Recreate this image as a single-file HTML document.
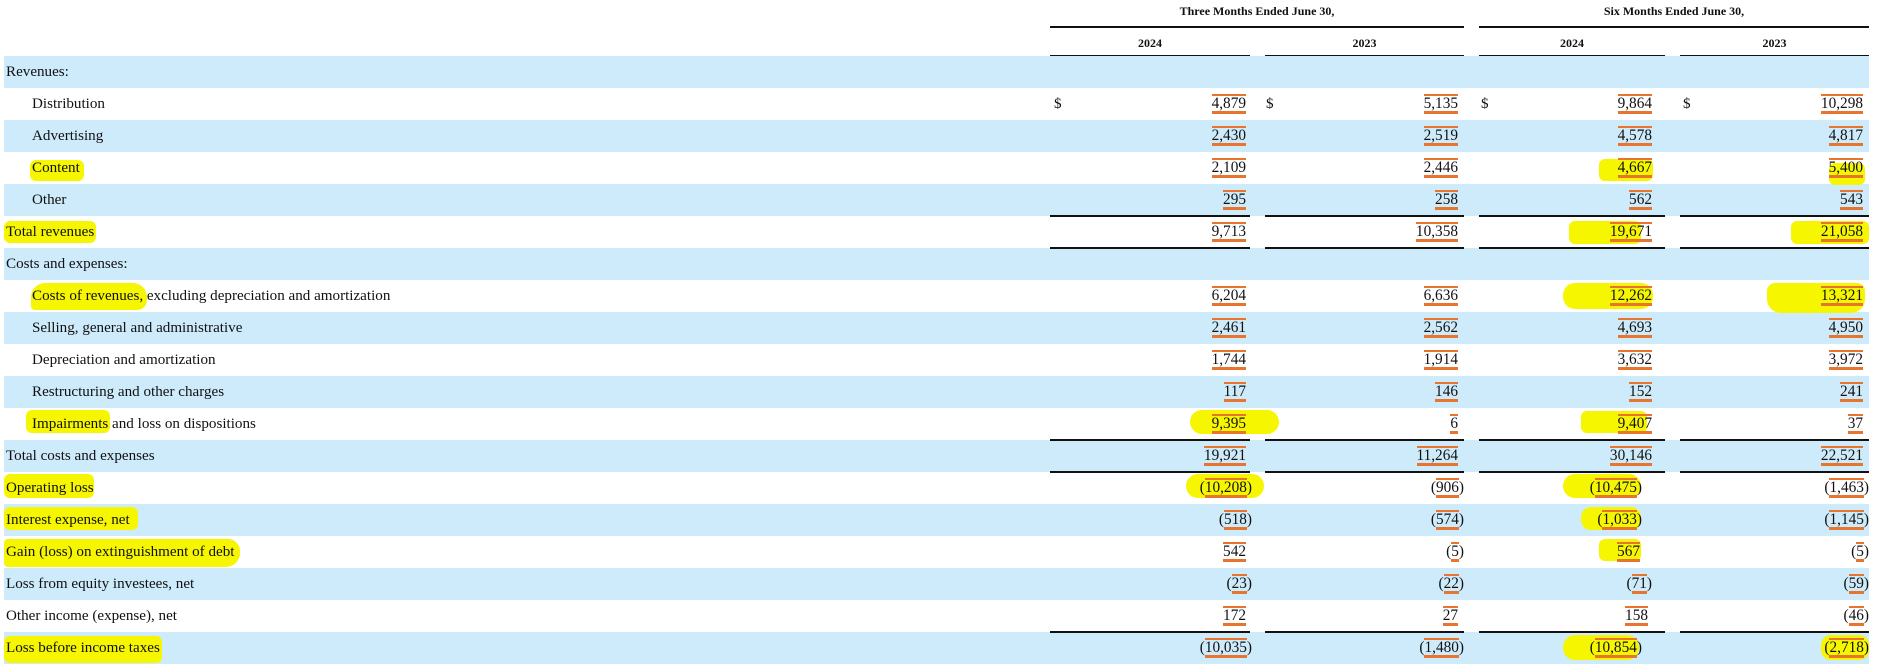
<!DOCTYPE html>
<html><head><meta charset="utf-8"><style>
body{margin:0;width:1878px;height:664px;background:#fff;position:relative;overflow:hidden;font-family:"Liberation Serif",serif;color:#111;}
.h{position:absolute;font-weight:bold;font-size:12px;text-align:center;line-height:14px;}
.ln{position:absolute;height:2px;background:#111;}
.row{position:absolute;left:4px;width:1865px;height:32px;}
.b{background:#cdebfb;}
.t{position:absolute;font-size:15.1px;line-height:32px;white-space:nowrap;z-index:2;}
.v{position:absolute;font-size:15.3px;line-height:32px;text-align:right;white-space:nowrap;z-index:2;}
.v span{border-top:2px solid #e8752e;border-bottom:3px solid #e8752e;line-height:15px;display:inline-block;}
.hl{position:absolute;background:#f6f600;border-radius:6px;z-index:1;}
</style></head><body>
<div class="h" style="left:1050px;width:414px;top:4px">Three Months Ended June 30,</div>
<div class="h" style="left:1479px;width:390px;top:4px">Six Months Ended June 30,</div>
<div class="ln" style="left:1050px;width:414px;top:26px"></div>
<div class="ln" style="left:1479px;width:390px;top:26px"></div>
<div class="h" style="left:1050px;width:200px;top:36px">2024</div>
<div class="h" style="left:1265px;width:199px;top:36px">2023</div>
<div class="h" style="left:1479px;width:186px;top:36px">2024</div>
<div class="h" style="left:1680px;width:189px;top:36px">2023</div>
<div class="ln" style="left:1050px;width:200px;top:55px"></div>
<div class="ln" style="left:1265px;width:199px;top:55px"></div>
<div class="ln" style="left:1479px;width:186px;top:55px"></div>
<div class="ln" style="left:1680px;width:189px;top:55px"></div>

<div class="row b" style="top:56px"></div>
<div class="row b" style="top:120px"></div>
<div class="row b" style="top:184px"></div>
<div class="row b" style="top:248px"></div>
<div class="row b" style="top:312px"></div>
<div class="row b" style="top:376px"></div>
<div class="row b" style="top:440px"></div>
<div class="row b" style="top:504px"></div>
<div class="row b" style="top:568px"></div>
<div class="row b" style="top:632px"></div>

<div class="hl" style="left:30px;top:160px;width:54px;height:21px"></div>
<div class="hl" style="left:4px;top:221px;width:92px;height:22px"></div>
<div class="hl" style="left:31px;top:283px;width:116px;height:27px;border-radius:14px 14px 10px 4px"></div>
<div class="hl" style="left:26px;top:410px;width:84px;height:23px"></div>
<div class="hl" style="left:1190px;top:410px;width:89px;height:24px;border-radius:12px"></div>
<div class="hl" style="left:4px;top:474px;width:90px;height:24px"></div>
<div class="hl" style="left:1186px;top:474px;width:78px;height:24px;border-radius:12px"></div>
<div class="hl" style="left:4px;top:507px;width:134px;height:23px"></div>
<div class="hl" style="left:4px;top:539px;width:236px;height:28px;border-radius:4px 12px 14px 4px"></div>
<div class="hl" style="left:4px;top:636px;width:158px;height:27px"></div>
<div class="hl" style="left:1569px;top:221px;width:72px;height:23px"></div>
<div class="hl" style="left:1791px;top:221px;width:78px;height:23px"></div>
<div class="hl" style="left:1599px;top:159px;width:54px;height:22px"></div>
<div class="hl" style="left:1829px;top:163px;width:36px;height:22px"></div>
<div class="hl" style="left:1563px;top:283px;width:90px;height:26px;border-radius:12px"></div>
<div class="hl" style="left:1767px;top:283px;width:98px;height:30px;border-radius:8px 8px 14px 14px"></div>
<div class="hl" style="left:1581px;top:411px;width:66px;height:22px"></div>
<div class="hl" style="left:1563px;top:474px;width:78px;height:24px;border-radius:12px"></div>
<div class="hl" style="left:1581px;top:507px;width:60px;height:23px;border-radius:10px"></div>
<div class="hl" style="left:1599px;top:539px;width:42px;height:22px"></div>
<div class="hl" style="left:1563px;top:635px;width:76px;height:25px;border-radius:12px"></div>
<div class="hl" style="left:1821px;top:635px;width:48px;height:25px;border-radius:10px"></div>

<div class="ln" style="left:1050px;width:200px;top:215px;height:1.5px"></div><div class="ln" style="left:1265px;width:199px;top:215px;height:1.5px"></div><div class="ln" style="left:1479px;width:186px;top:215px;height:1.5px"></div><div class="ln" style="left:1680px;width:189px;top:215px;height:1.5px"></div>
<div class="ln" style="left:1050px;width:200px;top:247px;height:1.5px"></div><div class="ln" style="left:1265px;width:199px;top:247px;height:1.5px"></div><div class="ln" style="left:1479px;width:186px;top:247px;height:1.5px"></div><div class="ln" style="left:1680px;width:189px;top:247px;height:1.5px"></div>
<div class="ln" style="left:1050px;width:200px;top:439px;height:1.5px"></div><div class="ln" style="left:1265px;width:199px;top:439px;height:1.5px"></div><div class="ln" style="left:1479px;width:186px;top:439px;height:1.5px"></div><div class="ln" style="left:1680px;width:189px;top:439px;height:1.5px"></div>
<div class="ln" style="left:1050px;width:200px;top:471px;height:1.5px"></div><div class="ln" style="left:1265px;width:199px;top:471px;height:1.5px"></div><div class="ln" style="left:1479px;width:186px;top:471px;height:1.5px"></div><div class="ln" style="left:1680px;width:189px;top:471px;height:1.5px"></div>
<div class="ln" style="left:1050px;width:200px;top:631px;height:1.5px"></div><div class="ln" style="left:1265px;width:199px;top:631px;height:1.5px"></div><div class="ln" style="left:1479px;width:186px;top:631px;height:1.5px"></div><div class="ln" style="left:1680px;width:189px;top:631px;height:1.5px"></div>

<div class="t" style="left:6px;top:56px">Revenues:</div>
<div class="t" style="left:32px;top:88px">Distribution</div>
<div class="t" style="left:32px;top:120px">Advertising</div>
<div class="t" style="left:32px;top:152px">Content</div>
<div class="t" style="left:32px;top:184px">Other</div>
<div class="t" style="left:6px;top:216px">Total revenues</div>
<div class="t" style="left:6px;top:248px">Costs and expenses:</div>
<div class="t" style="left:32px;top:280px">Costs of revenues, excluding depreciation and amortization</div>
<div class="t" style="left:32px;top:312px">Selling, general and administrative</div>
<div class="t" style="left:32px;top:344px">Depreciation and amortization</div>
<div class="t" style="left:32px;top:376px">Restructuring and other charges</div>
<div class="t" style="left:32px;top:408px">Impairments and loss on dispositions</div>
<div class="t" style="left:6px;top:440px">Total costs and expenses</div>
<div class="t" style="left:6px;top:472px">Operating loss</div>
<div class="t" style="left:6px;top:504px">Interest expense, net</div>
<div class="t" style="left:6px;top:536px">Gain (loss) on extinguishment of debt</div>
<div class="t" style="left:6px;top:568px">Loss from equity investees, net</div>
<div class="t" style="left:6px;top:600px">Other income (expense), net</div>
<div class="t" style="left:6px;top:632px">Loss before income taxes</div>

<div class="t" style="left:1054px;top:88px">$</div>
<div class="t" style="left:1266px;top:88px">$</div>
<div class="t" style="left:1481px;top:88px">$</div>
<div class="t" style="left:1683px;top:88px">$</div>

<div class="v" style="right:632px;top:88px"><span>4,879</span></div><div class="v" style="right:420px;top:88px"><span>5,135</span></div><div class="v" style="right:226px;top:88px"><span>9,864</span></div><div class="v" style="right:15px;top:88px"><span>10,298</span></div>
<div class="v" style="right:632px;top:120px"><span>2,430</span></div><div class="v" style="right:420px;top:120px"><span>2,519</span></div><div class="v" style="right:226px;top:120px"><span>4,578</span></div><div class="v" style="right:15px;top:120px"><span>4,817</span></div>
<div class="v" style="right:632px;top:152px"><span>2,109</span></div><div class="v" style="right:420px;top:152px"><span>2,446</span></div><div class="v" style="right:226px;top:152px"><span>4,667</span></div><div class="v" style="right:15px;top:152px"><span>5,400</span></div>
<div class="v" style="right:632px;top:184px"><span>295</span></div><div class="v" style="right:420px;top:184px"><span>258</span></div><div class="v" style="right:226px;top:184px"><span>562</span></div><div class="v" style="right:15px;top:184px"><span>543</span></div>
<div class="v" style="right:632px;top:216px"><span>9,713</span></div><div class="v" style="right:420px;top:216px"><span>10,358</span></div><div class="v" style="right:226px;top:216px"><span>19,671</span></div><div class="v" style="right:15px;top:216px"><span>21,058</span></div>
<div class="v" style="right:632px;top:280px"><span>6,204</span></div><div class="v" style="right:420px;top:280px"><span>6,636</span></div><div class="v" style="right:226px;top:280px"><span>12,262</span></div><div class="v" style="right:15px;top:280px"><span>13,321</span></div>
<div class="v" style="right:632px;top:312px"><span>2,461</span></div><div class="v" style="right:420px;top:312px"><span>2,562</span></div><div class="v" style="right:226px;top:312px"><span>4,693</span></div><div class="v" style="right:15px;top:312px"><span>4,950</span></div>
<div class="v" style="right:632px;top:344px"><span>1,744</span></div><div class="v" style="right:420px;top:344px"><span>1,914</span></div><div class="v" style="right:226px;top:344px"><span>3,632</span></div><div class="v" style="right:15px;top:344px"><span>3,972</span></div>
<div class="v" style="right:632px;top:376px"><span>117</span></div><div class="v" style="right:420px;top:376px"><span>146</span></div><div class="v" style="right:226px;top:376px"><span>152</span></div><div class="v" style="right:15px;top:376px"><span>241</span></div>
<div class="v" style="right:632px;top:408px"><span>9,395</span></div><div class="v" style="right:420px;top:408px"><span>6</span></div><div class="v" style="right:226px;top:408px"><span>9,407</span></div><div class="v" style="right:15px;top:408px"><span>37</span></div>
<div class="v" style="right:632px;top:440px"><span>19,921</span></div><div class="v" style="right:420px;top:440px"><span>11,264</span></div><div class="v" style="right:226px;top:440px"><span>30,146</span></div><div class="v" style="right:15px;top:440px"><span>22,521</span></div>
<div class="v" style="right:626px;top:472px">(<span>10,208</span>)</div><div class="v" style="right:414px;top:472px">(<span>906</span>)</div><div class="v" style="right:236px;top:472px">(<span>10,475</span>)</div><div class="v" style="right:9px;top:472px">(<span>1,463</span>)</div>
<div class="v" style="right:626px;top:504px">(<span>518</span>)</div><div class="v" style="right:414px;top:504px">(<span>574</span>)</div><div class="v" style="right:236px;top:504px">(<span>1,033</span>)</div><div class="v" style="right:9px;top:504px">(<span>1,145</span>)</div>
<div class="v" style="right:632px;top:536px"><span>542</span></div><div class="v" style="right:414px;top:536px">(<span>5</span>)</div><div class="v" style="right:238px;top:536px"><span>567</span></div><div class="v" style="right:9px;top:536px">(<span>5</span>)</div>
<div class="v" style="right:626px;top:568px">(<span>23</span>)</div><div class="v" style="right:414px;top:568px">(<span>22</span>)</div><div class="v" style="right:226px;top:568px">(<span>71</span>)</div><div class="v" style="right:9px;top:568px">(<span>59</span>)</div>
<div class="v" style="right:632px;top:600px"><span>172</span></div><div class="v" style="right:420px;top:600px"><span>27</span></div><div class="v" style="right:230px;top:600px"><span>158</span></div><div class="v" style="right:9px;top:600px">(<span>46</span>)</div>
<div class="v" style="right:626px;top:632px">(<span>10,035</span>)</div><div class="v" style="right:414px;top:632px">(<span>1,480</span>)</div><div class="v" style="right:236px;top:632px">(<span>10,854</span>)</div><div class="v" style="right:9px;top:632px">(<span>2,718</span>)</div>
</body></html>
